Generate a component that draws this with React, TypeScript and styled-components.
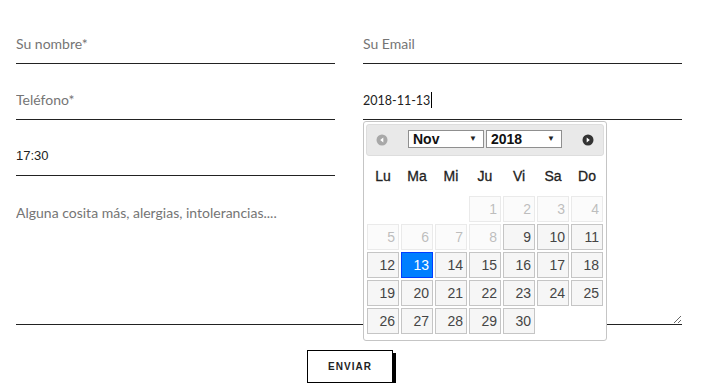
import React from "react";
import styled, { createGlobalStyle } from "styled-components";

const GlobalStyle = createGlobalStyle`
  body {
    margin: 0;
    background: #fff;
  }
`;

const Page = styled.div`
  padding: 27px 0 0 16px;
`;

const Form = styled.form`
  width: 666px;
  display: flex;
  flex-direction: column;
  align-items: center;
`;

const Grid = styled.div`
  width: 100%;
  display: grid;
  grid-template-columns: 319px 319px;
  column-gap: 28px;
  row-gap: 19px;
`;

const Field = styled.div`
  position: relative;
`;

const Input = styled.input<{ $arial?: boolean }>`
  display: block;
  box-sizing: border-box;
  width: 100%;
  height: 37px;
  padding: 0 0 3px;
  border: 0;
  border-bottom: 1px solid #222;
  outline: none;
  background: transparent;
  font-family: ${(p) => (p.$arial ? '"Liberation Sans", Arial' : "Lato")}, sans-serif;
  font-size: ${(p) => (p.$arial ? "13px" : "14px")};
  color: #222;
  &::placeholder {
    color: #757575;
  }
`;

const FocusedValue = styled.div`
  box-sizing: border-box;
  height: 37px;
  padding-bottom: 2px;
  display: flex;
  align-items: center;
  border-bottom: 1px solid #222;
  font-family: Lato, sans-serif;
  font-size: 12.5px;
  color: #222;
`;

const Caret = styled.span`
  display: inline-block;
  width: 1px;
  height: 16px;
  margin-left: 1px;
  background: #000;
`;

const TextArea = styled.textarea`
  grid-column: 1 / 3;
  display: block;
  box-sizing: border-box;
  width: 100%;
  height: 130px;
  padding: 9px 0 0;
  border: 0;
  border-bottom: 1px solid #222;
  outline: none;
  resize: vertical;
  font-family: Lato, sans-serif;
  font-size: 14px;
  color: #222;
  &::placeholder {
    color: #757575;
  }
`;

const SubmitButton = styled.button`
  margin-top: 25px;
  margin-left: 2px;
  width: 86px;
  height: 33px;
  background: #fff;
  border: 1px solid #000;
  box-shadow: 3px 3px 0 #000;
  font-family: "Liberation Sans", Arial, sans-serif;
  font-size: 10px;
  font-weight: bold;
  letter-spacing: 1px;
  color: #222;
  cursor: pointer;
`;

/* datepicker */

const Picker = styled.div`
  position: absolute;
  top: 38px;
  left: 0;
  z-index: 10;
  box-sizing: border-box;
  width: 244px;
  padding: 2px 2px 0;
  background: #fff;
  border: 1px solid #c5c5c5;
  border-radius: 3px;
  font-family: "Liberation Sans", Arial, sans-serif;
`;

const Header = styled.div`
  box-sizing: border-box;
  height: 32px;
  display: grid;
  grid-template-columns: 1fr auto 1fr;
  align-items: center;
  background: #e9e9e9;
  border: 1px solid #dddddd;
  border-radius: 3px;
`;

const NavIcon = styled.svg<{ $next?: boolean }>`
  width: 12px;
  height: 12px;
  justify-self: ${(p) => (p.$next ? "end" : "start")};
  margin: ${(p) => (p.$next ? "0 9px 0 0" : "0 0 0 9px")};
`;

const Selects = styled.div`
  display: flex;
  gap: 2px;
  margin-top: -2px;
`;

const SelectBox = styled.div`
  position: relative;
  box-sizing: border-box;
  width: 76px;
  height: 18px;
  padding-left: 4px;
  background: #fff;
  border: 1px solid #8f8f8f;
  font-size: 14px;
  font-weight: bold;
  line-height: 16px;
  color: #111;
`;

const SelectArrow = styled.span`
  position: absolute;
  right: 6px;
  top: 0;
  font-size: 8px;
  line-height: 16px;
  color: #222;
`;

const Table = styled.table`
  width: 100%;
  border-collapse: collapse;
  margin: 0 0 5px;
`;

const DayHead = styled.th`
  height: 39px;
  padding: 0;
  font-size: 14px;
  font-weight: normal;
  color: #222;
  text-align: center;
  -webkit-text-stroke: 0.3px #222;
`;

const DayCell = styled.td`
  padding: 1px;
`;

const DayLink = styled.a<{ $disabled?: boolean; $active?: boolean }>`
  display: block;
  box-sizing: border-box;
  height: 26px;
  padding-right: 3px;
  line-height: 24px;
  text-align: right;
  text-decoration: none;
  font-size: 14px;
  border: 1px solid ${(p) => (p.$active ? "#003eff" : "#c5c5c5")};
  background: ${(p) => (p.$active ? "#007fff" : "#f6f6f6")};
  color: ${(p) => (p.$active ? "#fff" : "#454545")};
  opacity: ${(p) => (p.$disabled ? 0.35 : 1)};
  cursor: ${(p) => (p.$disabled ? "default" : "pointer")};
`;

const weekDays = ["Lu", "Ma", "Mi", "Ju", "Vi", "Sa", "Do"];

const weeks: (number | null)[][] = [
  [null, null, null, 1, 2, 3, 4],
  [5, 6, 7, 8, 9, 10, 11],
  [12, 13, 14, 15, 16, 17, 18],
  [19, 20, 21, 22, 23, 24, 25],
  [26, 27, 28, 29, 30, null, null],
];

const selectedDay = 13;
const minDay = 9;

const DatePicker: React.FC = () => (
  <Picker>
    <Header>
      <NavIcon viewBox="0 0 12 12">
        <circle cx="6" cy="6" r="5.5" fill="#a8a8a8" />
        <path d="M7.3 3.4 L4.2 6 L7.3 8.6 Z" fill="#fff" />
      </NavIcon>
      <Selects>
        <SelectBox>
          Nov
          <SelectArrow>▼</SelectArrow>
        </SelectBox>
        <SelectBox>
          2018
          <SelectArrow>▼</SelectArrow>
        </SelectBox>
      </Selects>
      <NavIcon viewBox="0 0 12 12" $next>
        <circle cx="6" cy="6" r="5.5" fill="#333" />
        <path d="M4.7 3.4 L7.8 6 L4.7 8.6 Z" fill="#fff" />
      </NavIcon>
    </Header>
    <Table>
      <thead>
        <tr>
          {weekDays.map((d) => (
            <DayHead key={d}>{d}</DayHead>
          ))}
        </tr>
      </thead>
      <tbody>
        {weeks.map((week, i) => (
          <tr key={i}>
            {week.map((day, j) => (
              <DayCell key={j}>
                {day !== null && (
                  <DayLink
                    $disabled={day < minDay}
                    $active={day === selectedDay}
                  >
                    {day}
                  </DayLink>
                )}
              </DayCell>
            ))}
          </tr>
        ))}
      </tbody>
    </Table>
  </Picker>
);

export default function App() {
  return (
    <Page>
      <GlobalStyle />
      <Form onSubmit={(e) => e.preventDefault()}>
        <Grid>
          <Field>
            <Input placeholder="Su nombre*" />
          </Field>
          <Field>
            <Input placeholder="Su Email" />
          </Field>
          <Field>
            <Input placeholder="Teléfono*" />
          </Field>
          <Field>
            <FocusedValue>
              2018-11-13
              <Caret />
            </FocusedValue>
            <DatePicker />
          </Field>
          <Field>
            <Input $arial defaultValue="17:30" />
          </Field>
          <Field />
          <TextArea placeholder="Alguna cosita más, alergias, intolerancias...." />
        </Grid>
        <SubmitButton type="submit">ENVIAR</SubmitButton>
      </Form>
    </Page>
  );
}
